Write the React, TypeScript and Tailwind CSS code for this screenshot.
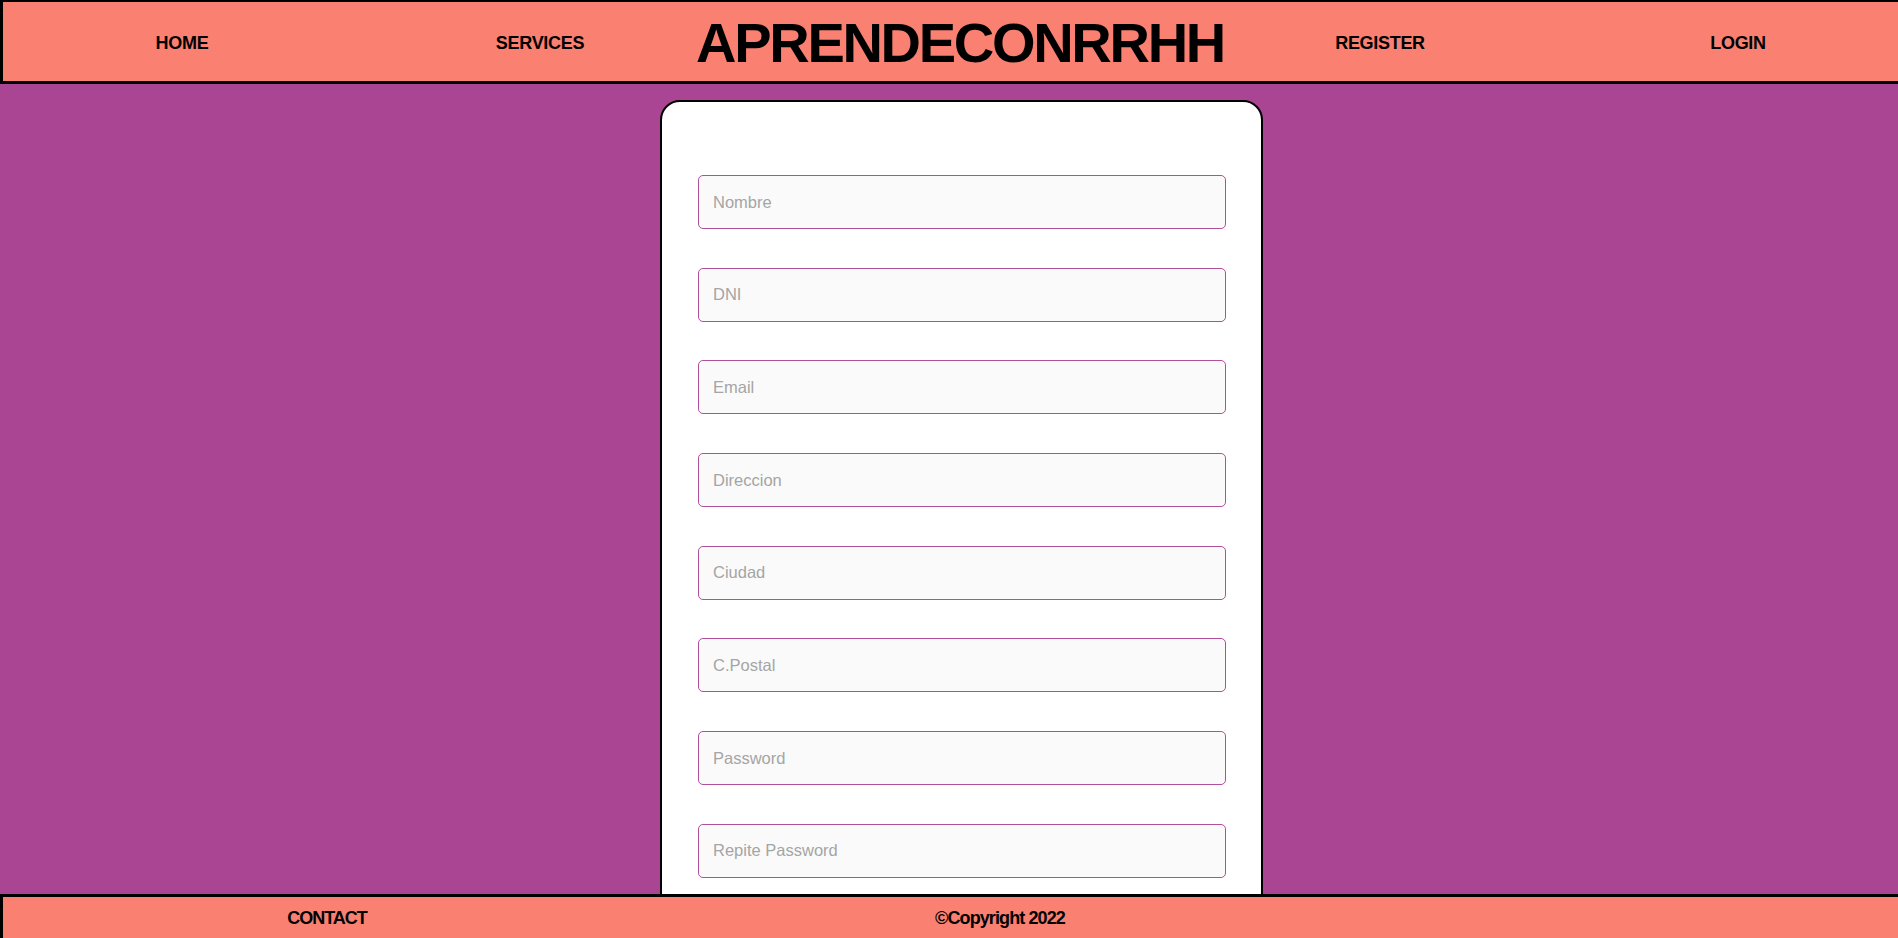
import { useState } from "react";

const navLeft = ["HOME", "SERVICES"];
const navRight = ["REGISTER", "LOGIN"];

const fields = [
  { name: "nombre", placeholder: "Nombre", type: "text" },
  { name: "dni", placeholder: "DNI", type: "text" },
  { name: "email", placeholder: "Email", type: "email" },
  { name: "direccion", placeholder: "Direccion", type: "text" },
  { name: "ciudad", placeholder: "Ciudad", type: "text" },
  { name: "cpostal", placeholder: "C.Postal", type: "text" },
  { name: "password", placeholder: "Password", type: "password" },
  { name: "password2", placeholder: "Repite Password", type: "password" },
];

export default function App() {
  const [values, setValues] = useState<Record<string, string>>({});

  return (
    <div className="h-[938px] w-full overflow-hidden bg-[#aa4593] font-['Liberation_Sans',Arial,sans-serif]">
      <div className="flex h-full w-[1920px] flex-col">
        {/* Header */}
        <header className="grid h-[84px] shrink-0 grid-cols-[358px_358px_minmax(0,1fr)_358px_358px] items-center border-[3px] border-t-2 border-black bg-[#fa8072] pt-[3px]">
          {navLeft.map((item) => (
            <a
              key={item}
              href="#"
              className="text-center text-[18px] font-bold tracking-[-0.3px] text-black"
            >
              {item}
            </a>
          ))}
          <div className="flex justify-center">
            <h1 className="whitespace-nowrap text-[56px] leading-none font-bold tracking-[-2.3px] text-black">
              APRENDECONRRHH
            </h1>
          </div>
          {navRight.map((item) => (
            <a
              key={item}
              href="#"
              className="text-center text-[18px] font-bold tracking-[-0.3px] text-black"
            >
              {item}
            </a>
          ))}
        </header>

        {/* Register form */}
        <main className="flex min-h-0 flex-1 justify-center overflow-hidden pt-4">
          <form
            className="ml-[3px] flex h-max w-[603px] flex-col gap-[38.7px] rounded-[20px] border-2 border-black bg-white pl-[36px] pr-[35px] pt-[73px] pb-16"
            onSubmit={(e) => e.preventDefault()}
          >
            {fields.map((f) => (
              <input
                key={f.name}
                type={f.type}
                name={f.name}
                placeholder={f.placeholder}
                value={values[f.name] ?? ""}
                onChange={(e) =>
                  setValues({ ...values, [f.name]: e.target.value })
                }
                className="h-[54px] w-full rounded-[5px] border border-[#b0509c] bg-[#fafafa] px-[14px] text-[16.5px] text-black outline-none placeholder:text-[#a5a5a5]"
              />
            ))}
          </form>
        </main>

        {/* Footer */}
        <footer className="grid h-[44px] shrink-0 grid-cols-[648px_698px_1fr] items-center border-t-[3px] border-l-[3px] border-black bg-[#fa8072] pt-[1px]">
          <a
            href="#"
            className="text-center text-[18px] font-bold tracking-[-1px] text-black"
          >
            CONTACT
          </a>
          <p className="text-center text-[18px] font-bold tracking-[-0.9px] text-black">
            ©Copyright 2022
          </p>
          <span />
        </footer>
      </div>
    </div>
  );
}
